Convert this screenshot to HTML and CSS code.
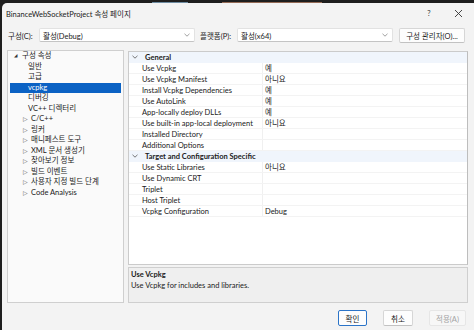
FILE: index.html
```html
<!DOCTYPE html>
<html lang="ko">
<head>
    <meta charset="UTF-8">
    <title>BinanceWebSocketProject 속성 페이지</title>
    <link rel="stylesheet" href="styles.css">
</head>
<body>
    <!-- editor behind the dialog, only its last pixels show -->
    <div class="editor">
        <span class="code-bit code-kw"></span>
        <span class="code-bit code-str"></span>
    </div>

    <div class="window">
        <div class="titlebar">
            <span class="title">BinanceWebSocketProject 속성 페이지</span>
            <span class="help">?</span>
            <svg class="close" width="9" height="9" viewBox="0 0 9 9"><path d="M1 1L8 8M8 1L1 8" stroke="#333" stroke-width="0.9"/></svg>
        </div>

        <div class="configbar">
            <span class="label">구성(C):</span>
            <div class="combo combo-config">
                <span>활성(Debug)</span>
                <svg width="6" height="4" viewBox="0 0 6 4"><path d="M0.5 0.8L3 3.2L5.5 0.8" fill="none" stroke="#888" stroke-width="0.8"/></svg>
            </div>
            <span class="label label-platform">플랫폼(P):</span>
            <div class="combo combo-platform">
                <span>활성(x64)</span>
                <svg width="6" height="4" viewBox="0 0 6 4"><path d="M0.5 0.8L3 3.2L5.5 0.8" fill="none" stroke="#888" stroke-width="0.8"/></svg>
            </div>
            <button class="btn btn-manager">구성 관리자(O)...</button>
        </div>

        <div class="main">
            <div class="tree">
                <div class="node"><span class="exp">◢</span>구성 속성</div>
                <div class="node leaf">일반</div>
                <div class="node leaf">고급</div>
                <div class="node leaf selected">vcpkg</div>
                <div class="node leaf">디버깅</div>
                <div class="node leaf">VC++ 디렉터리</div>
                <div class="node sub"><span class="col">▷</span>C/C++</div>
                <div class="node sub"><span class="col">▷</span>링커</div>
                <div class="node sub"><span class="col">▷</span>매니페스트 도구</div>
                <div class="node sub"><span class="col">▷</span>XML 문서 생성기</div>
                <div class="node sub"><span class="col">▷</span>찾아보기 정보</div>
                <div class="node sub"><span class="col">▷</span>빌드 이벤트</div>
                <div class="node sub"><span class="col">▷</span>사용자 지정 빌드 단계</div>
                <div class="node sub"><span class="col">▷</span>Code Analysis</div>
            </div>

            <div class="right">
                <div class="grid">
                    <div class="row header">
                        <svg class="chev" width="6" height="4" viewBox="0 0 6 4"><path d="M0.5 0.8L3 3.2L5.5 0.8" fill="none" stroke="#555" stroke-width="0.8"/></svg>
                        <span class="name">General</span>
                    </div>
                    <div class="row"><span class="name">Use Vcpkg</span><span class="value">예</span></div>
                    <div class="row"><span class="name">Use Vcpkg Manifest</span><span class="value">아니요</span></div>
                    <div class="row"><span class="name">Install Vcpkg Dependencies</span><span class="value">예</span></div>
                    <div class="row"><span class="name">Use AutoLink</span><span class="value">예</span></div>
                    <div class="row"><span class="name">App-locally deploy DLLs</span><span class="value">예</span></div>
                    <div class="row"><span class="name">Use built-in app-local deployment</span><span class="value">아니요</span></div>
                    <div class="row"><span class="name">Installed Directory</span><span class="value"></span></div>
                    <div class="row"><span class="name">Additional Options</span><span class="value"></span></div>
                    <div class="row header">
                        <svg class="chev" width="6" height="4" viewBox="0 0 6 4"><path d="M0.5 0.8L3 3.2L5.5 0.8" fill="none" stroke="#555" stroke-width="0.8"/></svg>
                        <span class="name">Target and Configuration Specific</span>
                    </div>
                    <div class="row"><span class="name">Use Static Libraries</span><span class="value">아니요</span></div>
                    <div class="row"><span class="name">Use Dynamic CRT</span><span class="value"></span></div>
                    <div class="row"><span class="name">Triplet</span><span class="value"></span></div>
                    <div class="row"><span class="name">Host Triplet</span><span class="value"></span></div>
                    <div class="row"><span class="name">Vcpkg Configuration</span><span class="value">Debug</span></div>
                </div>

                <div class="desc">
                    <div class="desc-title">Use Vcpkg</div>
                    <div class="desc-text">Use Vcpkg for includes and libraries.</div>
                </div>
            </div>
        </div>

        <div class="footer">
            <button class="btn btn-ok">확인</button>
            <button class="btn btn-cancel">취소</button>
            <button class="btn btn-apply" disabled>적용(A)</button>
        </div>
    </div>
</body>
</html>
```

FILE: styles.css
```css
body {
    margin: 0;
    width: 474px;
    height: 330px;
    overflow: hidden;
    background: #1e1e1e;
    font-family: 'Lato', 'Noto Sans CJK KR', sans-serif;
    font-size: 7.5px;
    color: #1b1b1b;
}

/* Editor strip peeking above the dialog */
.editor {
    height: 3px;
    display: flex;
    align-items: flex-end;
    gap: 34px;
    padding-left: 152px;
}

.code-bit {
    height: 1px;
    opacity: 0.7;
}

.code-kw {
    width: 36px;
    background: #8fb9d8;
}

.code-str {
    width: 100px;
    background: #c58a6c;
}

.window {
    margin-left: 2px;
    height: 327px;
    background: #f3f3f3;
    border-top-left-radius: 5px;
    display: flex;
    flex-direction: column;
}

/* Title bar */
.titlebar {
    height: 20px;
    display: flex;
    align-items: center;
    padding-left: 4px;
    flex-shrink: 0;
}

.title {
    flex: 1;
}

.help {
    width: 10px;
    margin-right: 20px;
    text-align: center;
    color: #333;
}

.close {
    margin-right: 11px;
}

/* Configuration row */
.configbar {
    height: 24px;
    display: flex;
    align-items: center;
    padding-left: 6px;
    flex-shrink: 0;
}

.label {
    width: 31px;
}

.label-platform {
    width: 37px;
    margin-left: 5px;
}

.combo {
    height: 14px;
    box-sizing: border-box;
    background: #fff;
    border: 1px solid #e2e2e2;
    border-bottom-color: #c4c4c4;
    border-radius: 2px;
    display: flex;
    align-items: center;
    justify-content: space-between;
    padding: 0 4px 0 3px;
}

.combo-config {
    width: 156px;
}

.combo-platform {
    width: 156px;
}

.btn {
    font-family: inherit;
    font-size: 7.5px;
    color: #1b1b1b;
    background: #fdfdfd;
    border: 1px solid #d6d6d6;
    border-bottom-color: #c2c2c2;
    border-radius: 2px;
    padding: 0;
    height: 15px;
    box-sizing: border-box;
    white-space: nowrap;
}

.btn-manager {
    width: 66px;
    margin-left: 6px;
}

/* Main area */
.main {
    flex: 1;
    display: flex;
    gap: 4px;
    padding: 4px 6px 0 5px;
    min-height: 0;
}

.tree {
    width: 117px;
    box-sizing: border-box;
    margin-top: -1px;
    height: 253px;
    background: #fafafa;
    border: 1px solid #cfcfcf;
    padding: 0 2px;
}

.node {
    height: 10.5px;
    line-height: 10.5px;
    white-space: nowrap;
    padding-left: 12px;
}

.exp {
    font-family: 'DejaVu Sans', sans-serif;
    font-size: 4.5px;
    color: #333;
    display: inline-block;
    width: 6px;
    margin-left: -8px;
    margin-right: 2px;
    vertical-align: 1px;
}

.leaf {
    padding-left: 18px;
}

.sub {
    padding-left: 13px;
}

.col {
    font-family: 'DejaVu Sans', sans-serif;
    font-size: 6px;
    color: #555;
    display: inline-block;
    width: 8px;
}

.selected {
    background: #0b62c4;
    color: #fff;
}

.right {
    flex: 1;
    display: flex;
    flex-direction: column;
    gap: 2px;
}

.grid {
    height: 214px;
    box-sizing: border-box;
    background: #fff;
    border: 1px solid #cbcbcb;
    border-right-color: #bdbdbd;
}

.row {
    height: 11px;
    line-height: 11px;
    display: flex;
    border-bottom: 1px solid #f3f3f3;
    box-sizing: border-box;
    white-space: nowrap;
}

.row .name {
    width: 120px;
    padding-left: 13px;
    border-right: 1px solid #f0f0f0;
}

.row .value {
    padding-left: 2px;
}

.header {
    background: #f0f5fc;
    border-bottom-color: #f0f5fc;
    font-weight: bold;
    align-items: center;
}

.header .name {
    border-right: none;
    padding-left: 7px;
    width: auto;
}

.chev {
    margin-left: 3px;
}

.desc {
    height: 36px;
    box-sizing: border-box;
    background: #efefef;
    border: 1px solid #cfcfcf;
    padding: 1px 2px;
}

.desc-title {
    font-weight: bold;
    line-height: 11px;
}

.desc-text {
    line-height: 12px;
}

/* Footer buttons */
.footer {
    height: 24px;
    display: flex;
    align-items: flex-start;
    justify-content: flex-end;
    gap: 16px;
    padding: 4px 8px 0 0;
    flex-shrink: 0;
    box-sizing: border-box;
}

.btn-ok {
    width: 29px;
    height: 16px;
    border: 1px solid #2b74c8;
}

.btn-cancel {
    width: 30px;
    height: 16px;
}

.btn-apply {
    width: 37px;
    height: 16px;
    color: #a3a3a3;
    background: #f7f7f7;
    border-color: #e6e6e6;
}
```
